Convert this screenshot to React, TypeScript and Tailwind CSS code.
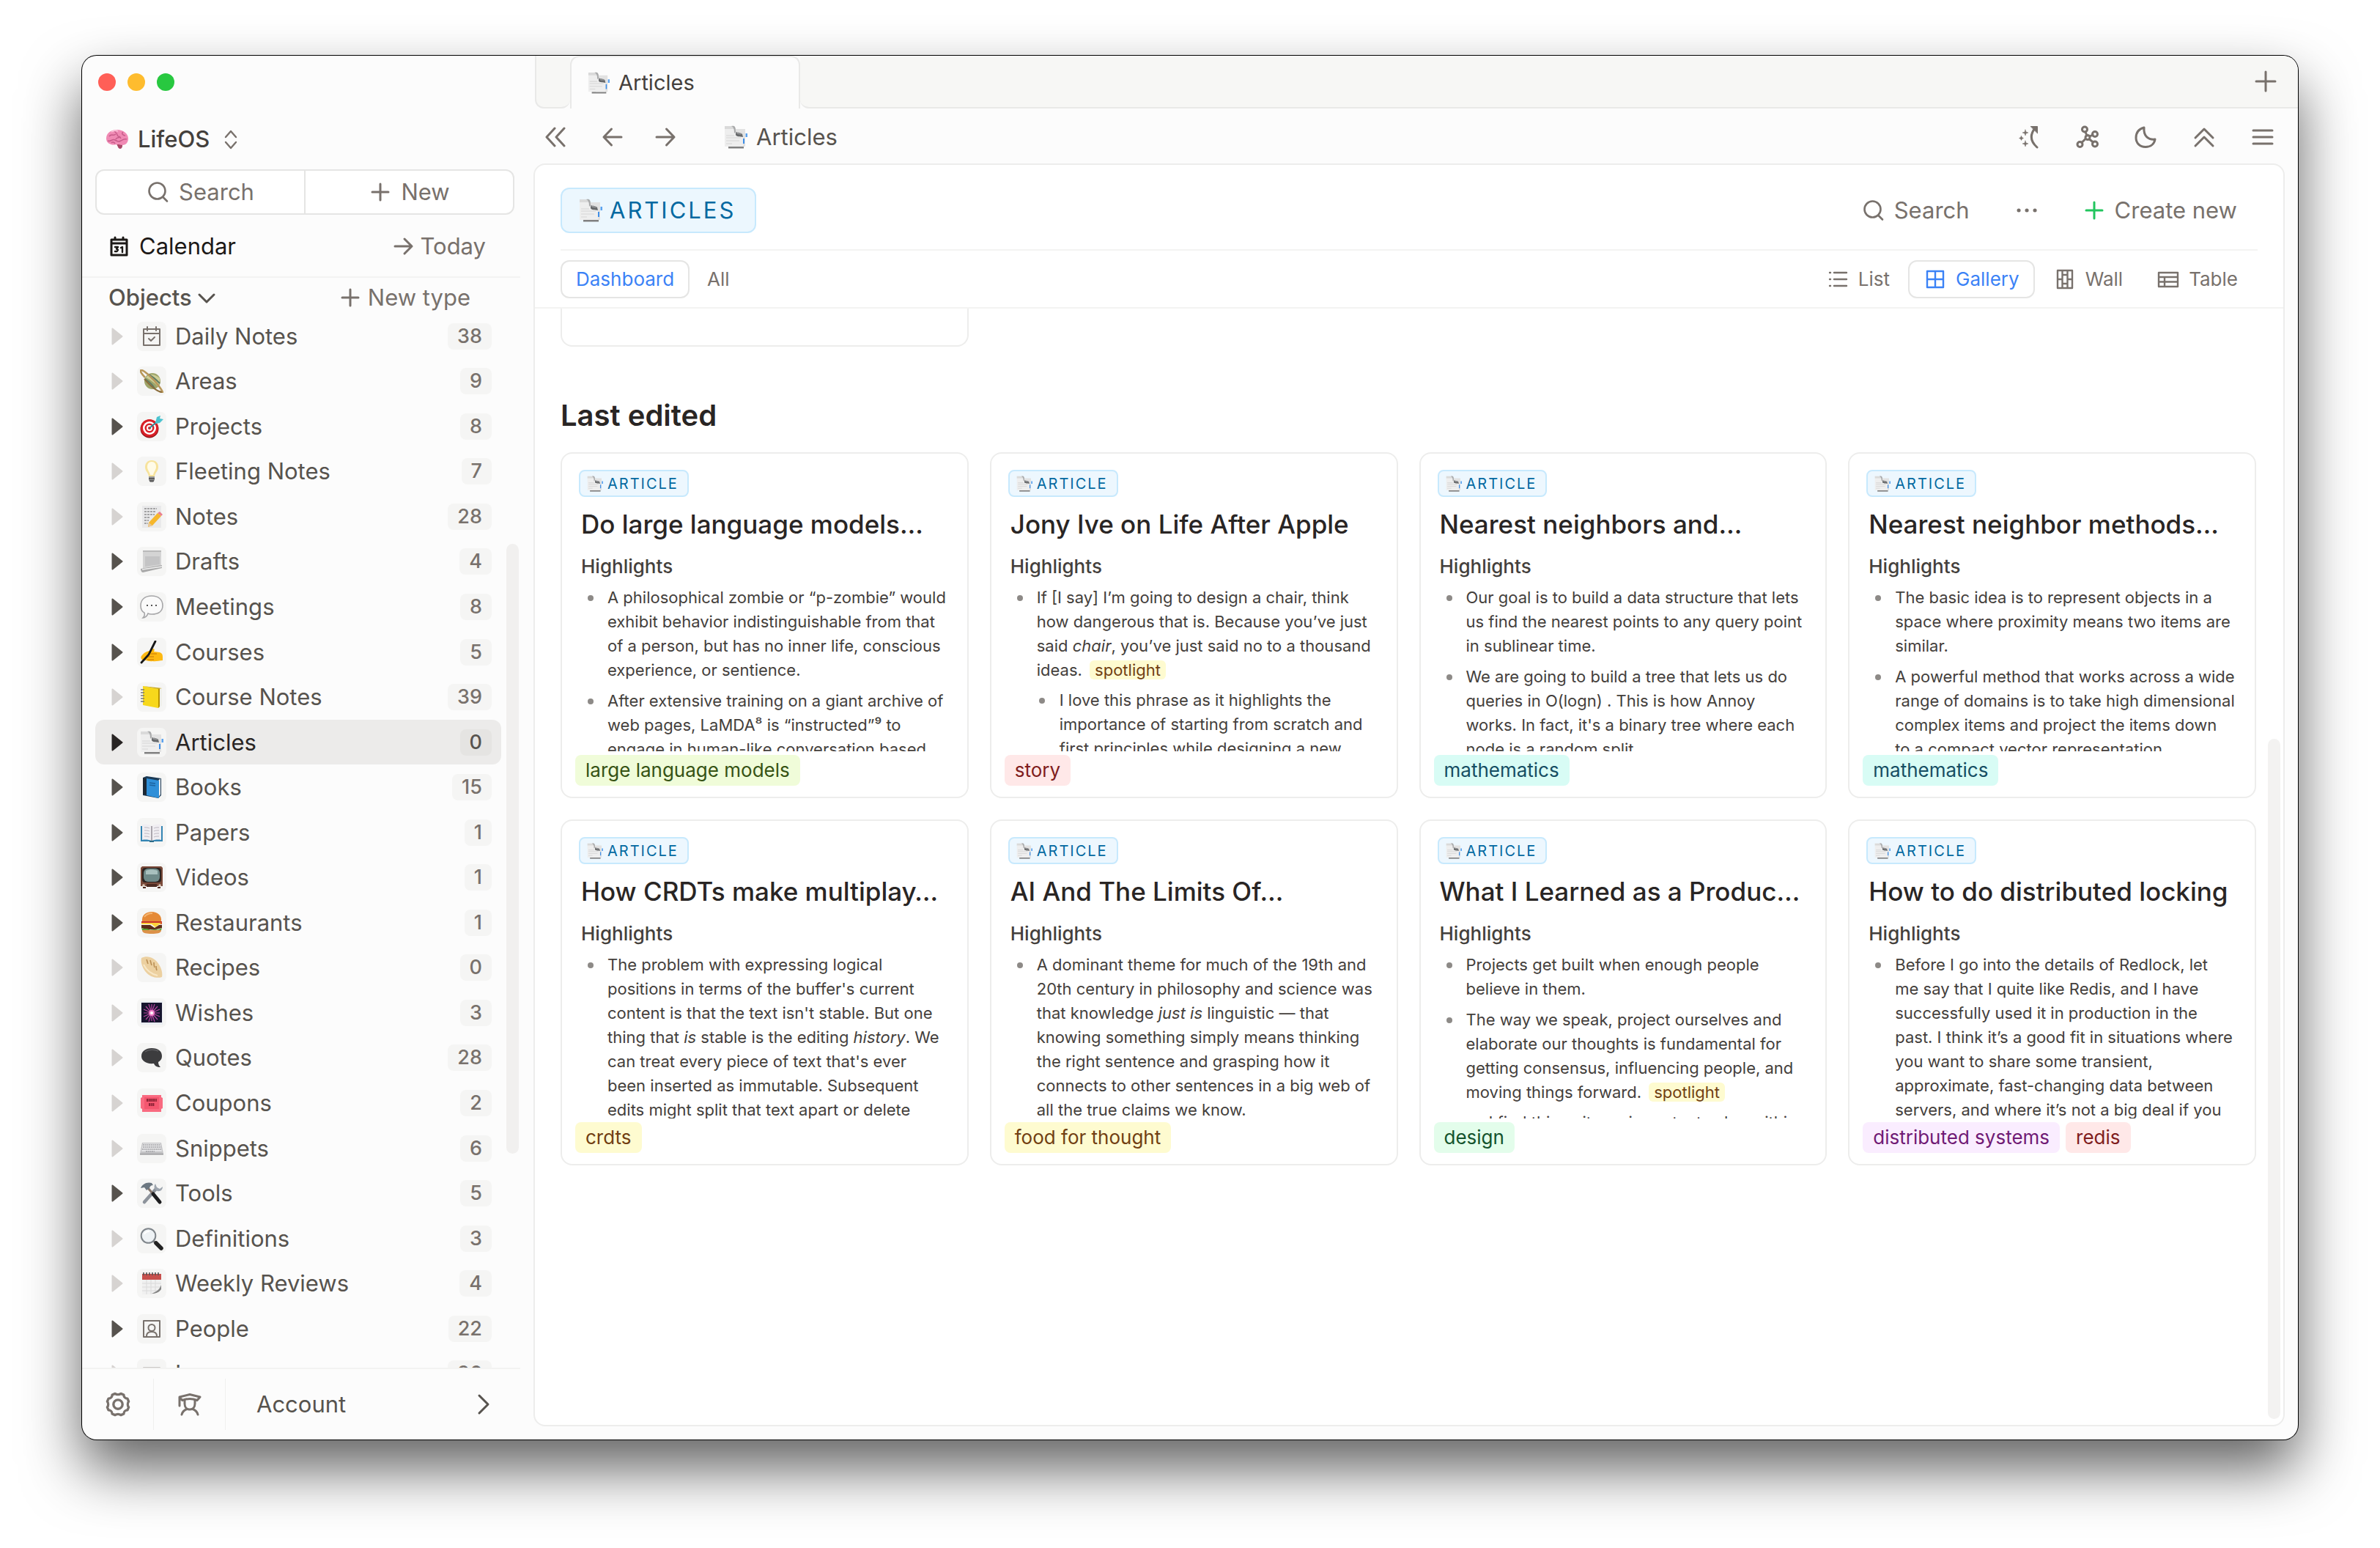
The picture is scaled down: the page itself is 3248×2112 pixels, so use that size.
import type { ReactNode } from "react";
import { clsx } from "clsx";

type IconProps = { children: ReactNode; className?: string; stroke?: number };

function Icon({ children, className = "size-8", stroke = 3 }: IconProps) {
  return (
    <svg
      viewBox="0 0 32 32"
      fill="none"
      stroke="currentColor"
      strokeWidth={stroke}
      strokeLinecap="round"
      strokeLinejoin="round"
      aria-hidden="true"
      className={clsx("shrink-0", className)}
    >
      {children}
    </svg>
  );
}

const SearchIcon = () => (
  <Icon stroke={2.6}>
    <circle cx="14.5" cy="14.5" r="11" />
    <path d="m22.5 23 5.5 5.5" />
  </Icon>
);

const PlusIcon = ({ className = "size-8" }: { className?: string }) => (
  <Icon className={className}>
    <path d="M16 5v22M5 16h22" />
  </Icon>
);

const ArrowRightIcon = () => (
  <Icon>
    <path d="M4 16h23M17 6l10 10-10 10" />
  </Icon>
);

const ArrowLeftIcon = () => (
  <Icon>
    <path d="M28 16H4M14.500 5 4 16l10.500 11" />
  </Icon>
);

/* ---------- emoji drawings ---------- */

function Emoji({ children, className = "size-8" }: { children: ReactNode; className?: string }) {
  return (
    <svg viewBox="0 0 32 32" aria-hidden="true" className={clsx("shrink-0", className)}>
      {children}
    </svg>
  );
}

const TabsEmoji = ({ className }: { className?: string }) => (
  <Emoji className={className}>
    <path d="M6 29h21v2.500H6z" fill="#808080" />
    <path d="M12 5h17v24H12z" fill="#e2e2e2" />
    <path d="M29.500 11H32v5h-2.500z" fill="#5aa2ef" />
    <path d="M26 18h2v7h-2z" fill="#3f8fe8" />
    <path d="M1 1h11c3 0 4 2 4 8h6l4 6v14H1z" fill="#eeeeee" />
    <path d="M1 1h11c2 0 3 1 3.500 4H1z" fill="#dadada" />
    <path d="M10 1c5-1 6 1 6 8l-2 2c0-4 0-8-4-10z" fill="#a9aaab" />
    <path d="M16 9c2 2 7 1 9 3l1 4c-4-1-9 0-10-3z" fill="#66686a" />
    <path d="M16 9c3 1 6 0 9 3-3 1-8 1-9-3z" fill="#8f9092" />
    <path d="M3 14h11M3 17h20M3 21h18M3 25h8" stroke="#d6d6d6" strokeWidth="1.200" />
  </Emoji>
);

const BrainEmoji = () => (
  <Emoji>
    <path d="M22 22c2 2 1 7-2 7-3 0-3-4-5-6z" fill="#a94868" />
    <path d="M1 15C1 7 8 3 16 3s15 5 15 12c0 5-3 9-8 9-3 0-5-2-8-1-6 2-14-1-14-8z" fill="#f08ab4" />
    <path
      d="M5 12c3-4 6 0 9-3M12 4c0 3 4 3 4 6s4 2 5 5M24 6c-3 2 0 5 3 5M3 18c4 2 6-3 10-1s4 3 8 1 5-3 8-2M8 21c1-2 4-1 5 1M20 12c-2 3-5 1-6 4"
      fill="none"
      stroke="#c75c8a"
      strokeWidth="1.500"
    />
    <path d="M8 6c3-2 7-2 9-1" stroke="#fbc4da" strokeWidth="1.500" fill="none" />
  </Emoji>
);

const emojis: Record<string, ReactNode> = {
  daily: (
    <Icon stroke={2} className="size-8 text-[#78716c]">
      <path d="M5 6h22v22H5zM5 12h22M10 3v5M22 3v5M12 19l3 3 5-5" />
    </Icon>
  ),
  planet: (
    <Emoji>
      <circle cx="17" cy="16" r="11" fill="#9fa56a" />
      <path d="M8 11c6 3 13 8 16 12 3-4 4-7 3-11C21 7 14 4 8 11z" fill="#cfcf96" />
      <path d="M12 7c6 3 11 8 15 12M7 13c6 4 11 9 13 13" stroke="#5f7d66" strokeWidth="2" fill="none" />
      <path d="M7 11C2 6-1 1 2 1s16 11 24 22 5 9 1 7" fill="none" stroke="#b8975a" strokeWidth="2.600" />
      <path d="M6 13c7 8 16 17 24 18" fill="none" stroke="#8b6d3c" strokeWidth="2" />
    </Emoji>
  ),
  target: (
    <Emoji>
      <circle cx="13" cy="19" r="12.500" fill="#8f1218" />
      <circle cx="13" cy="18" r="12" fill="#d92027" />
      <circle cx="13" cy="18" r="9" fill="#fff" />
      <circle cx="13" cy="18" r="6.500" fill="#d92027" />
      <circle cx="13" cy="18" r="4" fill="#fff" />
      <circle cx="13" cy="18" r="2" fill="#d92027" />
      <path d="M13 18 25 8" stroke="#2b8795" strokeWidth="1.800" />
      <path d="m21 11 2-8 5-2-1 4 5 1-5 5-6 1z" fill="#4cc3cf" />
    </Emoji>
  ),
  bulb: (
    <Emoji>
      <path d="M16 1c6 0 9 4 9 9 0 6-4 7-5 13h-8c-1-6-5-7-5-13 0-5 3-9 9-9z" fill="#f7e39c" />
      <path d="M16 3c4 0 6 3 6 7s-3 6-4 11h-4c-1-5-4-7-4-11s2-7 6-7z" fill="#fffbe8" />
      <path d="M12 23h8v5l-2 3h-4l-2-3z" fill="#999" />
      <path d="M12 26h8M13 29h6" stroke="#4a4a4a" strokeWidth="1.400" />
    </Emoji>
  ),
  memo: (
    <Emoji>
      <path d="M3 1h26v30H3z" fill="#e9e9ea" />
      <path d="M6 5h17M6 9h15M6 13h14M6 17h8M6 21h6M6 25h5" stroke="#8d8d8f" strokeWidth="1.500" strokeDasharray="3 1" />
      <path d="m12 24 12-13 5 4-12 13-6 2z" fill="#f6b72c" />
      <path d="m24 11 3-2 4 4-2 2z" fill="#e9808e" />
      <path d="m11 30 1-6 5 4z" fill="#e7c79a" />
    </Emoji>
  ),
  scroll: (
    <Emoji>
      <path d="M4 1h25v22L4 27z" fill="#d4d4d4" />
      <path d="M7 9h20v11l-20 3z" fill="#c4c4c5" />
      <path d="M1 26 30 21v4L4 31c-2 0-3-3-3-5z" fill="#a9a9a9" />
      <path d="m3 27 27-4" stroke="#efefef" strokeWidth="1.500" />
      <path d="M4 2h25" stroke="#9f9f9f" />
    </Emoji>
  ),
  speech: (
    <Emoji>
      <path d="M16 1c9 0 15 5 15 13s-6 12-15 12c-2 0-3 0-5-1-1 3-4 6-7 6 2-2 3-4 2-7-4-2-5-6-5-10C1 6 7 1 16 1z" fill="#fafafa" stroke="#a6a6a8" strokeWidth="1.600" />
      <path d="M9 14h2M15 14h2M21 14h2" stroke="#555" strokeWidth="2.200" />
    </Emoji>
  ),
  writing: (
    <Emoji>
      <path d="M2 21c4-5 8-7 12-7l4-3c2 0 2 2 1 4l8 1c3 1 4 3 4 6v5c-5 0-9 2-14 1-3 1-7-1-9-1-5 1-8-3-6-6z" fill="#fdb913" />
      <path d="M8 22h11M10 26h9M15 18h8" stroke="#d98a08" strokeWidth="1.400" />
      <path d="M21 1 12 19 2 30" stroke="#171717" strokeWidth="2.800" strokeLinecap="round" fill="none" />
    </Emoji>
  ),
  ledger: (
    <Emoji>
      <path d="m5 1 25 3v24l-5 3L5 27z" fill="#f0f0ea" />
      <path d="m4 1 21 4v26L4 27z" fill="#f7d81c" />
      <path d="m25 5 2-1v25l-2 2z" fill="#b89300" />
      <path d="m4 1 26 3-5 1z" fill="#c4a20f" />
      <path d="M1 6h5M1 10h5M1 14h5M1 18h5M1 22h5" stroke="#777" strokeWidth="1.600" />
    </Emoji>
  ),
  tabs: <TabsEmoji />,
  book: (
    <Emoji>
      <path d="M4 3 9 1l20 3v23l-4 4-21-4z" fill="#1b3a56" />
      <path d="m25 7 3-3v22l-3 4z" fill="#eee" />
      <path d="m9 4 17 3v24L9 27z" fill="#2f8fd8" />
      <path d="M4 3l5 1v23l-5-1z" fill="#1b2733" />
      <path d="M13 10l8 1M13 13l8 1" stroke="#1c639f" strokeWidth="1.600" />
    </Emoji>
  ),
  openbook: (
    <Emoji>
      <path d="M1 7h30v21H1z" fill="#3485b3" />
      <path d="M3 5c5-1 10 0 13 2 3-2 8-3 13-2v21c-5-1-10 0-13 1-3-1-8-2-13-1z" fill="#f0eef2" />
      <path d="M16 7v20" stroke="#8b8790" strokeWidth="1.400" />
      <path d="M6 9c3 0 5 0 7 1M6 13c3 0 5 0 7 1M6 17c3 0 5 0 7 1M6 21c3 0 5 0 7 1M19 10c2-1 4-1 7-1M19 14c2-1 4-1 7-1M19 18c2-1 4-1 7-1M19 22c2-1 4-1 7-1" stroke="#bcb7c1" fill="none" />
      <path d="M13 27h6v2h-6z" fill="#2b6a87" />
    </Emoji>
  ),
  tv: (
    <Emoji>
      <path d="M3 1h26l2 2v25H1V3z" fill="#7a4a3a" />
      <rect x="3" y="3" width="26" height="20" rx="4" fill="#2b2320" />
      <rect x="5" y="4" width="22" height="18" rx="6" fill="#6f8a89" />
      <path d="M8 7c5-2 11-2 16 0v5H8z" fill="#a9c0be" />
      <path d="M9 25h14v4H9z" fill="#4d2c22" />
      <circle cx="5" cy="27" r="1.800" fill="#d9c9b8" />
      <circle cx="27" cy="27" r="1.800" fill="#d9c9b8" />
      <path d="M4 29h4v2H4zM24 29h4v2h-4z" fill="#4d2c22" />
    </Emoji>
  ),
  burger: (
    <Emoji>
      <path d="M3 14C2 6 8 1 16 1s14 5 13 13z" fill="#e58a37" />
      <path d="M6 8c3-4 7-5 11-5" stroke="#f5b672" strokeWidth="2" fill="none" />
      <path d="M2 14h28v4H2z" fill="#c8352b" />
      <path d="M2 16h28l-5 3-4 3-5-4H2z" fill="#fcd33a" />
      <path d="M2 19h12l6 4 6-4h4v4c-9 3-19 3-28 0z" fill="#5b2c17" />
      <path d="M2 23c4 2 7 0 10 2s8-1 10 0 5 0 8-2l-1 3H3z" fill="#5ea332" />
      <path d="M3 26h26c0 4-5 5-13 5S3 30 3 26z" fill="#dc9148" />
    </Emoji>
  ),
  dumpling: (
    <Emoji>
      <path d="M2 3C10-1 20 2 26 12c4 6 5 13 4 17-6 2-16 1-23-8C2 14 1 8 2 3z" fill="#ecd0a0" />
      <path d="M9 5c1 2 1 4 2 6M14 6c1 3 1 5 2 7M19 9c0 3 0 5 1 7M22 14c0 2 0 4 1 6" stroke="#b98d52" strokeWidth="1.600" fill="none" />
      <path d="M5 12c4 8 11 13 19 15" stroke="#f8e7c6" strokeWidth="2" fill="none" />
    </Emoji>
  ),
  fireworks: (
    <Emoji>
      <path d="M1 0h30v32H1z" fill="#e9edf2" />
      <path d="M2 2h28v27H2z" fill="#16152e" />
      <path d="M16 4v23M5 16h22M8 7l16 18M24 7 8 25M12 4l8 24M20 4l-8 24M5 11l22 10M27 11 5 21" stroke="#b5459f" strokeWidth="1.200" />
      <circle cx="16" cy="16" r="4" fill="#ee7ec6" />
      <circle cx="16" cy="16" r="2" fill="#fff" />
    </Emoji>
  ),
  bubble: (
    <Emoji>
      <path d="M16 3c9 0 14 4 14 11 0 4-2 6-5 8 0 3 1 5 3 7-5 0-8-2-9-5-11 1-17-4-17-10C2 7 8 3 16 3z" fill="#3c3c3e" />
      <path d="M7 8c4-3 13-4 18-1" stroke="#5d5d60" strokeWidth="1.500" fill="none" />
    </Emoji>
  ),
  ticket: (
    <Emoji>
      <path d="M3 5h26v3l2 1v14l-2 1v4H3v-4l-2-1V9l2-1z" fill="#f96a80" />
      <path d="M6 8h20v16H6z" fill="#f4566f" />
      <path d="M9 12h14M12 18h8" stroke="#8f2437" strokeWidth="4" strokeDasharray="2 .6" />
    </Emoji>
  ),
  keyboard: (
    <Emoji>
      <path d="M3 8h26l3 15H0z" fill="#c3c3c5" />
      <path d="M4 9h24l2 11H2z" fill="#e5e5e7" />
      <path d="M4 11h24M4 14h25M3 17h26M8 20h12" stroke="#a2a2a6" strokeWidth="1.300" strokeDasharray="2 .7" />
      <path d="M0 23h32v1.500H0z" fill="#98989b" />
    </Emoji>
  ),
  tools: (
    <Emoji>
      <path d="M6 28 22 10" stroke="#8d939b" strokeWidth="4.500" strokeLinecap="round" />
      <path d="M21 3c-3 4-1 9 3 10s7-2 7-6l-4 3-4-2z" fill="#9da5ae" />
      <path d="M11 9 18 17" stroke="#84756c" strokeWidth="3.200" />
      <path d="m18 17 9 11" stroke="#1d1d1f" strokeWidth="5" strokeLinecap="round" />
      <path d="M1 9c2-5 8-9 15-7l2 3c-3 0-4 1-5 4L9 12 6 8z" fill="#6c7781" />
    </Emoji>
  ),
  lens: (
    <Emoji>
      <path d="m18 19 4 3" stroke="#777" strokeWidth="3" />
      <path d="m22 22 7 7" stroke="#222" strokeWidth="5.500" strokeLinecap="round" />
      <circle cx="11.500" cy="12" r="9.800" fill="#eef2f5" stroke="#7f858b" strokeWidth="2" />
      <path d="M6 10c1-3 4-4 7-4" stroke="#fff" strokeWidth="2" fill="none" />
    </Emoji>
  ),
  calendar: (
    <Emoji>
      <path d="M3 3h26v28H3z" fill="#f0f0f0" />
      <path d="M3 3h26v8H3z" fill="#c7504d" />
      <path d="M5 1v4M9 1v4M13 1v4M17 1v4M21 1v4M25 1v4" stroke="#545454" strokeWidth="1.600" />
      <path d="M3 16h26M3 21h26M3 26h26M9 11v20M15 11v20M21 11v20" stroke="#dadada" />
      <path d="M29 18c-2 6-6 9-13 12 5 0 10-2 13-4z" fill="#858585" />
      <path d="M18 31c6-2 9-4 11-7v7z" fill="#f5f5f4" />
    </Emoji>
  ),
  person: (
    <Icon stroke={2} className="size-8 text-[#78716c]">
      <path d="M5 5h22v22H5zM9 26c0-4 3-6 7-6s7 2 7 6" />
      <circle cx="16" cy="14.500" r="4.500" />
    </Icon>
  ),
  image: (
    <Icon stroke={2} className="size-8 text-[#c8c6c3]">
      <path d="M5 8h22v18H5z" />
    </Icon>
  ),
};

/* ---------- sidebar ---------- */

const objects = [
  { name: "Daily Notes", icon: "daily", count: 38, open: false },
  { name: "Areas", icon: "planet", count: 9, open: false },
  { name: "Projects", icon: "target", count: 8, open: true },
  { name: "Fleeting Notes", icon: "bulb", count: 7, open: false },
  { name: "Notes", icon: "memo", count: 28, open: false },
  { name: "Drafts", icon: "scroll", count: 4, open: true },
  { name: "Meetings", icon: "speech", count: 8, open: true },
  { name: "Courses", icon: "writing", count: 5, open: true },
  { name: "Course Notes", icon: "ledger", count: 39, open: false },
  { name: "Articles", icon: "tabs", count: 0, open: true },
  { name: "Books", icon: "book", count: 15, open: true },
  { name: "Papers", icon: "openbook", count: 1, open: true },
  { name: "Videos", icon: "tv", count: 1, open: true },
  { name: "Restaurants", icon: "burger", count: 1, open: true },
  { name: "Recipes", icon: "dumpling", count: 0, open: false },
  { name: "Wishes", icon: "fireworks", count: 3, open: false },
  { name: "Quotes", icon: "bubble", count: 28, open: false },
  { name: "Coupons", icon: "ticket", count: 2, open: false },
  { name: "Snippets", icon: "keyboard", count: 6, open: false },
  { name: "Tools", icon: "tools", count: 5, open: true },
  { name: "Definitions", icon: "lens", count: 3, open: false },
  { name: "Weekly Reviews", icon: "calendar", count: 4, open: false },
  { name: "People", icon: "person", count: 22, open: true },
  { name: "Images", icon: "image", count: 36, open: false },
];

function ObjectRow({ name, icon, count, open }: (typeof objects)[number]) {
  const active = name === "Articles";
  return (
    <li className={clsx("flex items-center rounded-xl pr-[13px] pl-[22px]", active && "bg-[#ecebea]")}>
      <button
        type="button"
        aria-label={`Expand ${name}`}
        className={clsx(active ? "text-[#292524]" : open ? "text-[#57534e]" : "text-[#d6d3d1]")}
      >
        <svg viewBox="0 0 16 24" className="h-6 w-4" fill="currentColor" stroke="currentColor" strokeWidth="2" strokeLinejoin="round">
          <path d="M1.500 1.500v21L14.500 12z" />
        </svg>
      </button>
      <a href="#articles" className="flex flex-1 items-center">
        <span className="mr-3 ml-[19px] flex size-10 items-center justify-center rounded-lg bg-[#f5f5f4]">
          {emojis[icon]}
        </span>
        <span className={clsx("flex-1", active ? "text-[#292524]" : "text-[#57534e]")}>{name}</span>
        <span
          className={clsx(
            "flex h-9 items-center rounded-lg px-[13px] text-[27px] font-medium",
            active ? "bg-[#e5e4e2] text-[#57534e]" : "bg-[#f5f5f4] text-[#78716c]",
          )}
        >
          {count}
        </span>
      </a>
    </li>
  );
}

function Sidebar() {
  return (
    <aside className="flex w-[616px] shrink-0 flex-col text-[31px] leading-9 text-[#78716c]">
      <div className="flex h-[72px] shrink-0 items-center gap-4 pl-[22px]">
        <button type="button" aria-label="Close" className="size-6 rounded-full bg-[#ff5f57]" />
        <button type="button" aria-label="Minimize" className="size-6 rounded-full bg-[#febc2e]" />
        <button type="button" aria-label="Zoom" className="size-6 rounded-full bg-[#28c840]" />
      </div>
      <button type="button" className="flex h-[83px] shrink-0 items-center pl-8 font-medium text-[#44403c]">
        <BrainEmoji />
        <span className="ml-3">LifeOS</span>
        <Icon stroke={2.4} className="ml-[13px] size-8 text-[#78716c]">
          <path d="m9 13 7-8 7 8M9 20l7 8 7-8" />
        </Icon>
      </button>
      <div className="mr-[26px] ml-[18px] flex h-[62px] shrink-0 divide-x-2 divide-[#e5e5e4] rounded-xl border-2 border-[#e5e5e4] bg-white">
        <button type="button" className="flex flex-1 items-center justify-center gap-3">
          <SearchIcon />
          Search
        </button>
        <button type="button" className="flex flex-1 items-center justify-center gap-3">
          <PlusIcon />
          New
        </button>
      </div>
      <div className="mr-[18px] flex h-[86px] shrink-0 items-center justify-between border-b-2 border-[#f3f3f2] pt-0.5 pr-[47px] pl-[34px]">
        <a href="#calendar" className="flex items-center gap-3 text-[#1c1917]">
          <Icon>
            <path d="M6 7h21v21H6zM6 12h21M11 4v3M22 4v3" />
            <path d="M11 17h4l-2 2.500 2 1.500-1.500 2H11M19 18l2-1v7" strokeWidth="2.400" />
          </Icon>
          Calendar
        </a>
        <a href="#today" className="flex items-center gap-1.5">
          <ArrowRightIcon />
          Today
        </a>
      </div>
      <div className="flex h-[49px] shrink-0 items-center justify-between pt-1 pr-[86px] pl-9">
        <button type="button" className="flex items-center gap-1 font-medium text-[#57534e]">
          Objects
          <Icon>
            <path d="m6 12 10 10 10-10" />
          </Icon>
        </button>
        <button type="button" className="flex items-center gap-2">
          <PlusIcon />
          New type
        </button>
      </div>
      <div className="relative min-h-0 flex-1 overflow-hidden pr-11 pl-[18px]">
        <ul className="grid h-[1477px] auto-rows-fr">
          {objects.map((object) => (
            <ObjectRow key={object.name} {...object} />
          ))}
        </ul>
        <div className="absolute top-[314px] right-5 h-[832px] w-[17px] rounded-full bg-[#f1f0ef]" />
      </div>
      <div className="mr-[18px] flex h-[98px] shrink-0 items-center border-t-2 border-[#f3f3f2]">
        <button type="button" aria-label="Settings" className="flex h-[70px] w-[98px] items-center justify-center border-r border-[#f0f0ef]">
          <Icon className="size-9">
            <circle cx="16" cy="16" r="5.500" />
            <path d="M12.500 3c2 1.500 5 1.500 7 0l3.500 1.500c0 2.500 2 4.500 4.500 4.500l1.500 3.500c-1.500 2-1.500 5 0 7L27.500 23c-2.500 0-4.500 2-4.500 4.500L19.500 29c-2-1.500-5-1.500-7 0L9 27.500C9 25 7 23 4.500 23L3 19.500c1.500-2 1.500-5 0-7L4.500 9C7 9 9 7 9 4.500z" />
          </Icon>
        </button>
        <button type="button" aria-label="Learn" className="flex h-[70px] w-[98px] items-center justify-center border-r border-[#f0f0ef]">
          <Icon>
            <path d="M2 18V6l14-3.500L30 6l-4 4.500c-6-2.500-14-2.500-20 0L2 7" />
            <path d="M9 10v5c0 5 3 8 7 8s7-3 7-8v-5M5 30c1-4 3-6 7-7.500M27 30c-1-4-3-6-7-7.500" />
          </Icon>
        </button>
        <button type="button" className="flex flex-1 items-center justify-between pr-[34px] pl-[42px] text-[#57534e]">
          Account
          <Icon>
            <path d="m10 4 12 12-12 12" />
          </Icon>
        </button>
      </div>
    </aside>
  );
}

/* ---------- top bars ---------- */

function TabBar() {
  return (
    <div className="ml-0.5 flex h-[72px] shrink-0">
      <div className="w-12 rounded-b-xl border-b-2 border-l-2 border-[#e9e9e8] bg-[#f7f7f5]" />
      <button type="button" className="flex w-[314px] items-center gap-3 rounded-t-xl border-x-2 border-t-2 border-[#e9e9e8] pl-[22px] text-[29px] text-[#44403c]">
        <TabsEmoji className="size-[30px]" />
        Articles
      </button>
      <div className="flex flex-1 items-center justify-end rounded-tr-[20px] rounded-bl-xl border-b-2 border-[#e9e9e8] bg-[#f7f7f5] pr-7 text-[#78716c]">
        <button type="button" aria-label="New tab">
          <Icon>
            <path d="M16 3v26M3 16h26" />
          </Icon>
        </button>
      </div>
    </div>
  );
}

const toolButton = "flex h-16 w-20 items-center justify-center";

function NavBar() {
  return (
    <div className="flex h-[75px] shrink-0 items-center justify-between pt-0.5 pr-2 text-[#78716c]">
      <div className="flex items-center">
        <button type="button" aria-label="Collapse sidebar" className="flex h-16 w-[60px] items-center justify-center">
          <Icon>
            <path d="M15 4 4 16l11 12M28 4 17 16l11 12" />
          </Icon>
        </button>
        <button type="button" aria-label="Back" className="ml-3 flex h-16 w-[72px] items-center justify-center">
          <ArrowLeftIcon />
        </button>
        <button type="button" aria-label="Forward" className="flex h-16 w-[72px] items-center justify-center">
          <Icon>
            <path d="M4 16h24M17.500 5 28 16 17.500 27" />
          </Icon>
        </button>
        <a href="#articles" className="ml-11 flex items-center gap-3 text-[31px] leading-9 text-[#57534e]">
          <TabsEmoji />
          Articles
        </a>
      </div>
      <div className="flex items-center">
        <button type="button" aria-label="Assist" className={toolButton}>
          <Icon>
            <path d="M28 30C19 22 18 13 25 4" />
            <path d="M19.500 1.500h9v9z" fill="currentColor" strokeWidth="1" />
            <path d="m12 6 1 3 3 1-3 1-1 3-1-3-3-1 3-1zM12 21l1 3 3 1-3 1-1 3-1-3-3-1 3-1zM6.500 14.500l1 2 2 1-2 1-1 2-1-2-2-1 2-1z" fill="currentColor" strokeWidth=".5" />
          </Icon>
        </button>
        <button type="button" aria-label="Graph" className={toolButton}>
          <Icon>
            <circle cx="13" cy="5.500" r="3.500" />
            <circle cx="27" cy="12" r="3.500" />
            <circle cx="17" cy="16.500" r="3" />
            <circle cx="6.500" cy="26" r="3.500" />
            <circle cx="27" cy="25.500" r="3.500" />
            <path d="m14 9 2 5M24 13l-4 2M14 18.500l-5 5M19.500 19l5 4" />
          </Icon>
        </button>
        <button type="button" aria-label="Dark mode" className={toolButton}>
          <Icon>
            <path d="M14 3C7 5 3 10 3 17c0 7 5 12.500 13 12.500 7 0 12-4 13-10.500-9 1-16-4-15-16z" />
          </Icon>
        </button>
        <button type="button" aria-label="Collapse all" className={toolButton}>
          <Icon>
            <path d="M4 17 16 5l12 12M4 28l12-12 12 12" />
          </Icon>
        </button>
        <button type="button" aria-label="Menu" className={toolButton}>
          <Icon>
            <path d="M3 7h26M3 16h26M3 25h26" />
          </Icon>
        </button>
      </div>
    </div>
  );
}

/* ---------- gallery ---------- */

type Bullet = { text: ReactNode; child?: string };
type Tag = { label: string; tone: string };
type Article = { title: string; bullets: Bullet[]; tags: Tag[] };

const lime = "bg-[#f0fcd9] text-[#365314]";
const red = "bg-[#ffe8e8] text-[#7f1d1d]";
const teal = "bg-[#d8fcf5] text-[#164e63]";
const yellow = "bg-[#fefbd0] text-[#713f12]";
const green = "bg-[#e3fdeb] text-[#14532d]";
const purple = "bg-[#faedff] text-[#701a75]";

const spotlight = <span className="ml-1 rounded-md bg-[#fefbd0] px-[7px] text-[#713f12]">spotlight</span>;

const articles: Article[] = [
  {
    title: "Do large language models…",
    bullets: [
      { text: "A philosophical zombie or “p-zombie” would exhibit behavior indistinguishable from that of a person, but has no inner life, conscious experience, or sentience." },
      { text: "After extensive training on a giant archive of web pages, LaMDA⁸ is “instructed”⁹ to engage in human-like conversation based" },
    ],
    tags: [{ label: "large language models", tone: lime }],
  },
  {
    title: "Jony Ive on Life After Apple",
    bullets: [
      {
        text: (
          <>
            If [I say] I’m going to design a chair, think how dangerous that is. Because you’ve just said <em>chair</em>, you’ve
            just said no to a thousand ideas. {spotlight}
          </>
        ),
        child: "I love this phrase as it highlights the importance of starting from scratch and first principles while designing a new",
      },
    ],
    tags: [{ label: "story", tone: red }],
  },
  {
    title: "Nearest neighbors and…",
    bullets: [
      { text: "Our goal is to build a data structure that lets us find the nearest points to any query point in sublinear time." },
      { text: "We are going to build a tree that lets us do queries in O(logn) . This is how Annoy works. In fact, it's a binary tree where each node is a random split." },
    ],
    tags: [{ label: "mathematics", tone: teal }],
  },
  {
    title: "Nearest neighbor methods…",
    bullets: [
      { text: "The basic idea is to represent objects in a space where proximity means two items are similar." },
      { text: "A powerful method that works across a wide range of domains is to take high dimensional complex items and project the items down to a compact vector representation." },
    ],
    tags: [{ label: "mathematics", tone: teal }],
  },
  {
    title: "How CRDTs make multiplay…",
    bullets: [
      {
        text: (
          <>
            The problem with expressing logical positions in terms of the buffer's current content is that the text isn't stable.
            But one thing that <em>is</em> stable is the editing <em>history</em>. We can treat every piece of text that's ever
            been inserted as immutable. Subsequent edits might split that text apart or delete
          </>
        ),
      },
    ],
    tags: [{ label: "crdts", tone: yellow }],
  },
  {
    title: "AI And The Limits Of…",
    bullets: [
      {
        text: (
          <>
            A dominant theme for much of the 19th and 20th century in philosophy and science was that knowledge <em>just is</em>{" "}
            linguistic — that knowing something simply means thinking the right sentence and grasping how it connects to other
            sentences in a big web of all the true claims we know.
          </>
        ),
      },
    ],
    tags: [{ label: "food for thought", tone: yellow }],
  },
  {
    title: "What I Learned as a Produc…",
    bullets: [
      { text: "Projects get built when enough people believe in them." },
      {
        text: (
          <>
            The way we speak, project ourselves and elaborate our thoughts is fundamental for getting consensus, influencing
            people, and moving things forward. {spotlight}
          </>
        ),
        child: "I find this quite an important value within",
      },
    ],
    tags: [{ label: "design", tone: green }],
  },
  {
    title: "How to do distributed locking",
    bullets: [
      {
        text: (
          <>
            Before I go into the details of Redlock, let
            <br />
            me say that I quite like Redis, and I have successfully used it in production in the past. I think it’s a good fit in
            situations where you want to share some transient, approximate, fast-changing data between servers, and where it’s not
            a big deal if you
          </>
        ),
      },
    ],
    tags: [
      { label: "distributed systems", tone: purple },
      { label: "redis", tone: red },
    ],
  },
];

const Dot = () => <span className="mt-[13px] size-2 shrink-0 rounded-full bg-[#8d8a87]" />;

function ArticleCard({ title, bullets, tags }: Article) {
  return (
    <article className="flex h-[472px] min-w-0 flex-col rounded-2xl border-2 border-[#ededec] px-[18px] pt-[22px] pb-[15px]">
      <div className="ml-[5px] flex h-[37px] shrink-0 items-center self-start rounded-lg border-2 border-[#c7e9fd] bg-[#edf7fe] pr-3 pl-[9px] text-[20px] tracking-[2px] text-[#0369a1]">
        <TabsEmoji className="mr-1.5 size-[22px]" />
        ARTICLE
      </div>
      <h3 className="mt-[15px] shrink-0 truncate pr-0 pl-2 text-[35px] leading-[44px] font-medium text-[#292524]">{title}</h3>
      <div className="mt-[18px] min-h-0 flex-1 overflow-hidden px-2 text-[#44403c]">
        <h4 className="text-[26px] leading-9 font-medium">Highlights</h4>
        <ul className="mt-2 flex flex-col gap-[9px] pl-[9px] text-[22px] leading-[33px]">
          {bullets.map((bullet, i) => (
            <li key={i} className="flex gap-[19px]">
              <Dot />
              <div>
                {bullet.text}
                {bullet.child && (
                  <ul className="mt-2 pl-[3px]">
                    <li className="flex gap-5">
                      <Dot />
                      <div>{bullet.child}</div>
                    </li>
                  </ul>
                )}
              </div>
            </li>
          ))}
        </ul>
      </div>
      <div className="mt-[5px] flex shrink-0 gap-2">
        {tags.map((tag) => (
          <a key={tag.label} href="#tag" className={clsx("rounded-lg px-3.5 text-[26px] leading-[42px]", tag.tone)}>
            {tag.label}
          </a>
        ))}
      </div>
    </article>
  );
}

const views = [
  { name: "List", icon: <path d="M5 7h1M5 16h1M5 25h1M11 7h17M11 16h17M11 25h17" /> },
  { name: "Gallery", icon: <path d="M5 5h22v22H5zM16 5v22M5 16h22" /> },
  { name: "Wall", icon: <path d="M6 4h20v24H6zM12.500 4v24M19.500 4v24M6 16h6.500M19.500 16H26M12.500 10h7M12.500 22h7" /> },
  { name: "Table", icon: <path d="M3 7h26v19H3zM3 13h26M3 19.500h26M11 13v13" /> },
];

function Panel() {
  return (
    <main className="relative mr-[18px] flex min-h-0 flex-1 flex-col overflow-hidden rounded-2xl border-2 border-[#ededec] bg-white text-[#78716c]">
      <header className="mx-[35px] flex h-[117px] shrink-0 items-center justify-between border-b-2 border-[#f3f3f2] pt-2 pr-7 text-[31px] leading-9">
        <h1 className="flex h-[62px] items-center gap-2.5 rounded-xl border-2 border-[#c7e9fd] bg-[#ecf7fe] pr-[26px] pl-[23px] tracking-[3px] text-[#0369a1]">
          <TabsEmoji />
          ARTICLES
        </h1>
        <div className="flex items-center">
          <button type="button" className="flex items-center gap-3">
            <SearchIcon />
            Search
          </button>
          <button type="button" aria-label="More" className="ml-[62px]">
            <Icon>
              <path d="M5 16h.1M16 16h.1M27 16h.1" strokeWidth="5" />
            </Icon>
          </button>
          <button type="button" className="ml-[60px] flex items-center gap-3">
            <PlusIcon className="size-8 text-[#22c55e]" />
            Create new
          </button>
        </div>
      </header>
      <div className="flex h-[79px] shrink-0 items-center justify-between border-b-2 border-[#f3f3f2] px-[35px] text-[26px] leading-8">
        <nav className="flex items-center">
          <button type="button" className="h-[52px] rounded-xl border-2 border-[#e5e5e4] px-[19px] text-[#3b82f6]">
            Dashboard
          </button>
          <button type="button" className="h-[52px] px-6">
            All
          </button>
        </nav>
        <div className="flex items-center gap-1 pr-1.5">
          {views.map((view) => (
            <button
              key={view.name}
              type="button"
              className={clsx(
                "flex h-[52px] items-center gap-3 rounded-xl border-2 px-[19px]",
                view.name === "Gallery" ? "border-[#e5e5e4] text-[#3b82f6]" : "border-transparent",
              )}
            >
              <Icon stroke={2.4}>{view.icon}</Icon>
              {view.name}
            </button>
          ))}
        </div>
      </div>
      <div className="min-h-0 flex-1 overflow-hidden pr-[37px] pl-[35px]">
        <div className="grid grid-cols-4 gap-[29px]">
          <div className="h-[52px] rounded-b-2xl border-x-2 border-b-2 border-[#ededec]" />
        </div>
        <h2 className="pt-16 pb-5 text-[40px] leading-[60px] font-semibold text-[#292524]">Last edited</h2>
        <div className="grid grid-cols-4 gap-[29px]">
          {articles.map((article) => (
            <ArticleCard key={article.title} {...article} />
          ))}
        </div>
      </div>
      <div className="absolute right-1 bottom-2 h-[928px] w-[17px] rounded-full bg-[#f3f2f1]" />
    </main>
  );
}

export default function App() {
  return (
    <div className="flex h-screen bg-white px-28 pt-[76px] pb-[148px] font-['Inter',sans-serif]">
      <div className="flex min-w-0 flex-1 overflow-hidden rounded-[20px] bg-[#fcfcfc] shadow-[0_0_0_1px_#000,0_40px_80px_rgba(0,0,0,0.62)]">
        <Sidebar />
        <div className="flex min-w-0 flex-1 flex-col pb-[18px]">
          <TabBar />
          <NavBar />
          <Panel />
        </div>
      </div>
    </div>
  );
}
